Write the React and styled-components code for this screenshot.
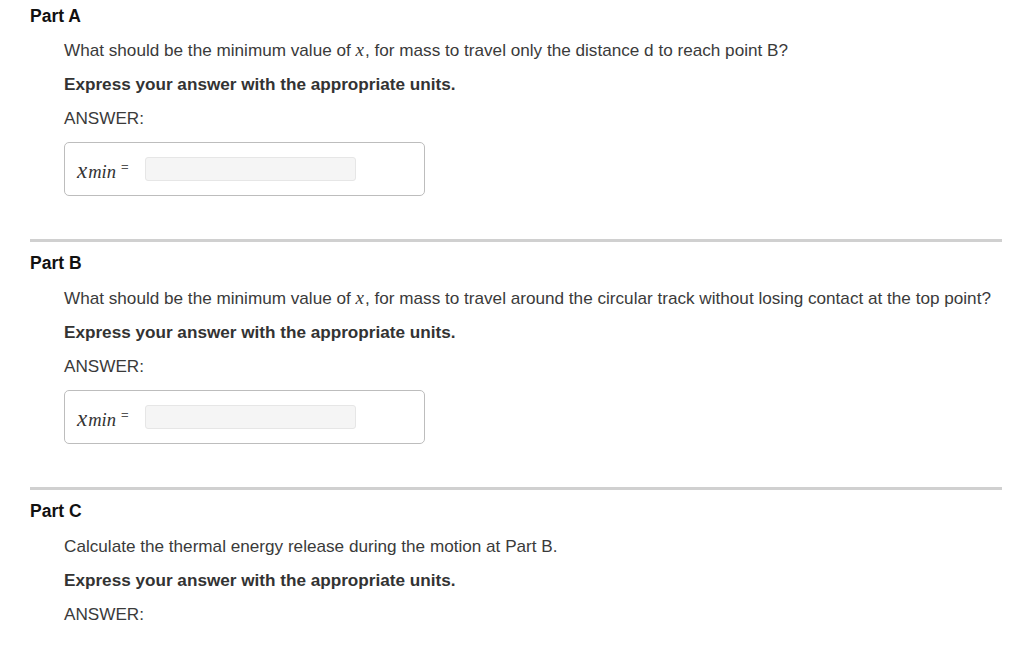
import styled, { createGlobalStyle } from 'styled-components'

const GlobalStyle = createGlobalStyle`
  body {
    margin: 0;
    background: #fff;
    font-family: 'Liberation Sans', Arial, sans-serif;
    color: #333;
  }
`

const Page = styled.div`
  width: 1026px;
  padding: 5px 24px 0 30px;
  box-sizing: border-box;
`

const Part = styled.section`
  display: flex;
  flex-direction: column;
`

const PartTitle = styled.h2`
  margin: 0;
  font-size: 17.5px;
  line-height: 22px;
  font-weight: 700;
  color: #111;
`

const Body = styled.div`
  display: flex;
  flex-direction: column;
  align-items: flex-start;
  padding-left: 34px;
  margin-top: ${(p) => p.$top || 13}px;
`

const Line = styled.p`
  margin: 0 0 ${(p) => p.$gap || 14}px;
  font-size: 17.15px;
  line-height: 20px;
  font-weight: ${(p) => (p.$bold ? 700 : 400)};
  color: ${(p) => (p.$bold ? '#333' : '#3a3a3a')};
`

const MathVar = styled.span`
  font-family: 'Liberation Serif', 'DejaVu Serif', serif;
  font-style: italic;
  font-size: 19px;
  padding-right: 1px;
`

const AnswerBox = styled.div`
  display: flex;
  align-items: center;
  width: 361px;
  height: 54px;
  padding: 0 0 0 12px;
  box-sizing: border-box;
  border: 1.5px solid #bdbdbd;
  border-radius: 5px;
`

const Label = styled.span`
  display: flex;
  align-items: baseline;
  font-family: 'Liberation Serif', 'DejaVu Serif', serif;
  font-style: italic;
  color: #333;
  font-size: 23px;
  width: 68px;
  margin-top: 3px;

  sub {
    font-size: 18.5px;
    vertical-align: -4px;
    line-height: 1;
    margin-left: 1px;
  }
`

const Equals = styled.span`
  font-family: 'Liberation Sans', Arial, sans-serif;
  font-style: normal;
  font-size: 13px;
  color: #555;
  margin-left: 5px;
  align-self: flex-start;
  margin-top: 1px;
`

const Input = styled.div`
  width: 211px;
  height: 24px;
  box-sizing: border-box;
  background: #f5f5f5;
  border: 1px solid #e6e6e6;
  border-radius: 3px;
`

const Divider = styled.hr`
  width: 972px;
  height: 3px;
  margin: 43px 0 10px;
  border: 0;
  background: #d0d0d0;
`

const parts = [
  {
    title: 'Part A',
    before: 'What should be the minimum value of ',
    after: ', for mass to travel only the distance d to reach point B?',
    box: true,
  },
  {
    title: 'Part B',
    before: 'What should be the minimum value of ',
    after: ', for mass to travel around the circular track without losing contact at the top point?',
    box: true,
  },
  {
    title: 'Part C',
    text: 'Calculate the thermal energy release during the motion at Part B.',
    box: false,
  },
]

const App = () => {
  return (
    <>
      <GlobalStyle />
      <Page>
        {parts.map((part, i) => (
          <div key={part.title}>
            {i > 0 && <Divider />}
            <Part>
              <PartTitle>{part.title}</PartTitle>
              <Body $top={i > 0 ? 14 : 13}>
                <Line>
                  {part.text ? (
                    part.text
                  ) : (
                    <>
                      {part.before}
                      <MathVar>x</MathVar>
                      {part.after}
                    </>
                  )}
                </Line>
                <Line $bold>Express your answer with the appropriate units.</Line>
                <Line>ANSWER:</Line>
                {part.box && (
                  <AnswerBox>
                    <Label>
                      x<sub>min</sub>
                      <Equals>=</Equals>
                    </Label>
                    <Input />
                  </AnswerBox>
                )}
              </Body>
            </Part>
          </div>
        ))}
      </Page>
    </>
  )
}

export default App
